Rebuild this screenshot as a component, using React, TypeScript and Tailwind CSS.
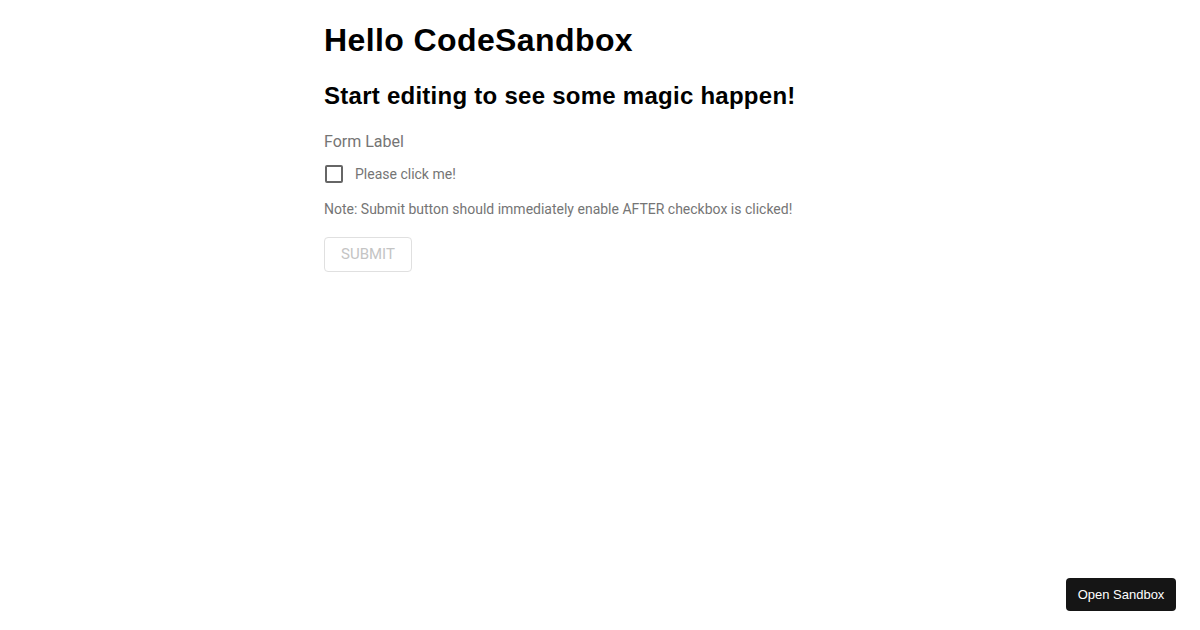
import React from "react";

export default function App() {
  return (
    <div className="relative h-[630px] w-full overflow-hidden bg-white pt-[22px]">
      <div className="mx-auto w-[552px]">
        <h1 className="text-[32px] font-bold leading-[37px] tracking-[0.4px] text-black [font-family:'Liberation_Sans',Arial,sans-serif]">
          Hello CodeSandbox
        </h1>
        <h2 className="mt-[23px] text-[24px] font-bold leading-[28px] tracking-[0.26px] text-black [font-family:'Liberation_Sans',Arial,sans-serif]">
          Start editing to see some magic happen!
        </h2>
        <div className="[font-family:Roboto,'Liberation_Sans',sans-serif]">
          <div className="mt-[22px] text-[16px] leading-[19px] text-[#757575]">Form Label</div>
          <label className="mt-[2px] flex h-[42px] items-center">
            <span className="ml-px box-border block h-[18px] w-[18px] rounded-[2px] border-2 border-[#666666]" />
            <span className="ml-[12px] text-[14px] leading-[20px] text-[#757575]">Please click me!</span>
          </label>
          <p className="mt-[4px] text-[14px] leading-[20px] text-[#757575]">
            Note: Submit button should immediately enable AFTER checkbox is clicked!
          </p>
          <button
            disabled
            className="mt-[18px] box-border h-[35px] rounded-[4px] border border-[#e0e0e0] px-[16px] text-[15px] font-normal uppercase leading-[23px] text-[#c4c4c4]"
          >
            Submit
          </button>
        </div>
      </div>
      <div className="absolute bottom-[19px] right-[24px] flex h-[33px] w-[110px] items-center justify-center rounded-[4px] bg-[#151515] text-[13px] text-white [font-family:'Liberation_Sans',Arial,sans-serif]">
        Open Sandbox
      </div>
    </div>
  );
}
